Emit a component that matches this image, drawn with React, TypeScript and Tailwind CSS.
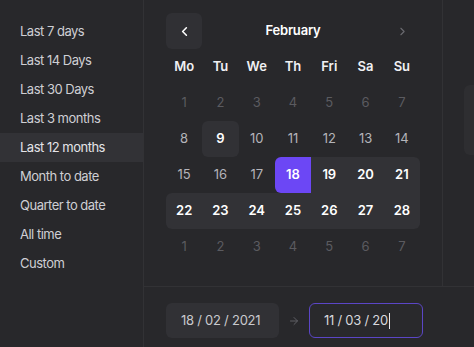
import { ChevronLeft, ChevronRight, ArrowRight } from "lucide-react";

const presets = [
  "Last 7 days",
  "Last 14 Days",
  "Last 30 Days",
  "Last 3 months",
  "Last 12 months",
  "Month to date",
  "Quarter to date",
  "All time",
  "Custom",
];

const weekdays = ["Mo", "Tu", "We", "Th", "Fri", "Sa", "Su"];

type Day = { n: number; kind: "out" | "normal" | "hover" | "start" | "range" };

function buildDays(): Day[] {
  const days: Day[] = [];
  for (let i = 1; i <= 7; i++) days.push({ n: i, kind: "out" });
  for (let i = 8; i <= 28; i++) {
    let kind: Day["kind"] = "normal";
    if (i === 9) kind = "hover";
    else if (i === 18) kind = "start";
    else if (i > 18) kind = "range";
    days.push({ n: i, kind });
  }
  for (let i = 1; i <= 7; i++) days.push({ n: i, kind: "out" });
  return days;
}

function DayCell({ day, index }: { day: Day; index: number }) {
  const col = index % 7;
  const row = Math.floor(index / 7);
  let cls = "h-9 flex items-center justify-center text-[13px] ";
  if (day.kind === "out") cls += "text-[#5b5b60]";
  else if (day.kind === "normal") cls += "text-[#b4b4ba]";
  else if (day.kind === "hover") cls += "text-white font-semibold bg-[#313135] rounded-md";
  else if (day.kind === "start") cls += "text-white font-semibold bg-[#6c47f5] rounded-l-md";
  else {
    cls += "text-white font-semibold bg-[#323236] ";
    if (row === 2 && col === 6) cls += "rounded-tr-md";
    if (row === 3 && col === 0) cls += "rounded-l-md";
    if (row === 3 && col === 6) cls += "rounded-br-md";
  }
  return <div className={cls}>{day.n}</div>;
}

export default function App() {
  const days = buildDays();
  return (
    <div
      className="w-[474px] h-[347px] flex bg-[#28282b] overflow-hidden"
      style={{ fontFamily: "Inter, 'Noto Sans', sans-serif" }}
    >
      <aside className="w-[144px] shrink-0 border-r border-[#323235] pt-[17px]">
        {presets.map((p) => (
          <div
            key={p}
            className={`h-[29px] flex items-center pl-5 text-[13px] tracking-[-0.5px] text-[#cfcfd4] ${
              p === "Last 12 months" ? "bg-[#323236] text-[#e4e4e8]" : ""
            }`}
          >
            {p}
          </div>
        ))}
      </aside>

      <div className="flex-1 flex flex-col">
        <div className="flex h-[287px] border-b border-[#323235]">
          <section className="w-[299px] shrink-0 border-r border-[#323235] pl-[22px] pt-[13px]">
            <div className="w-[254px] flex items-center h-9">
              <button className="w-9 h-9 rounded-md bg-[#303034] flex items-center justify-center text-white">
                <ChevronLeft size={15} strokeWidth={2.5} />
              </button>
              <div className="flex-1 text-center text-[13px] font-semibold tracking-[-0.2px] text-white">February</div>
              <button className="w-9 h-9 flex items-center justify-center text-[#6a6a70]">
                <ChevronRight size={13} strokeWidth={2} />
              </button>
            </div>
            <div className="w-[254px] grid grid-cols-7">
              {weekdays.map((w) => (
                <div key={w} className="h-9 flex items-center justify-center text-[13px] font-semibold text-[#f0f0f3]">
                  {w}
                </div>
              ))}
              {days.map((d, i) => (
                <DayCell key={i} day={d} index={i} />
              ))}
            </div>
          </section>
          <div className="flex-1 pt-[85px] pl-[21px]">
            <div className="h-[70px] w-full rounded-l-md bg-[#2e2e31]" />
          </div>
        </div>

        <div className="flex items-center pl-[22px] pt-[16px]">
          <div className="w-[113px] h-[35px] rounded-md bg-[#313135] flex items-center pl-[15px] text-[13px] tracking-[-0.25px] text-[#c9c9ce]">
            18 / 02 / 2021
          </div>
          <div className="w-[30px] flex justify-center text-[#5f5f65]">
            <ArrowRight size={12} strokeWidth={2} />
          </div>
          <div className="w-[114px] h-[35px] rounded-md border-[1.5px] border-[#5b46c6] bg-[#29292c] flex items-center pl-[14px] text-[13px] tracking-[-0.25px] text-[#d8d8dd]">
            11 / 03 / 20
            <span className="inline-block w-px h-[16px] bg-[#e8e8ec] ml-px" />
          </div>
        </div>
      </div>
    </div>
  );
}
